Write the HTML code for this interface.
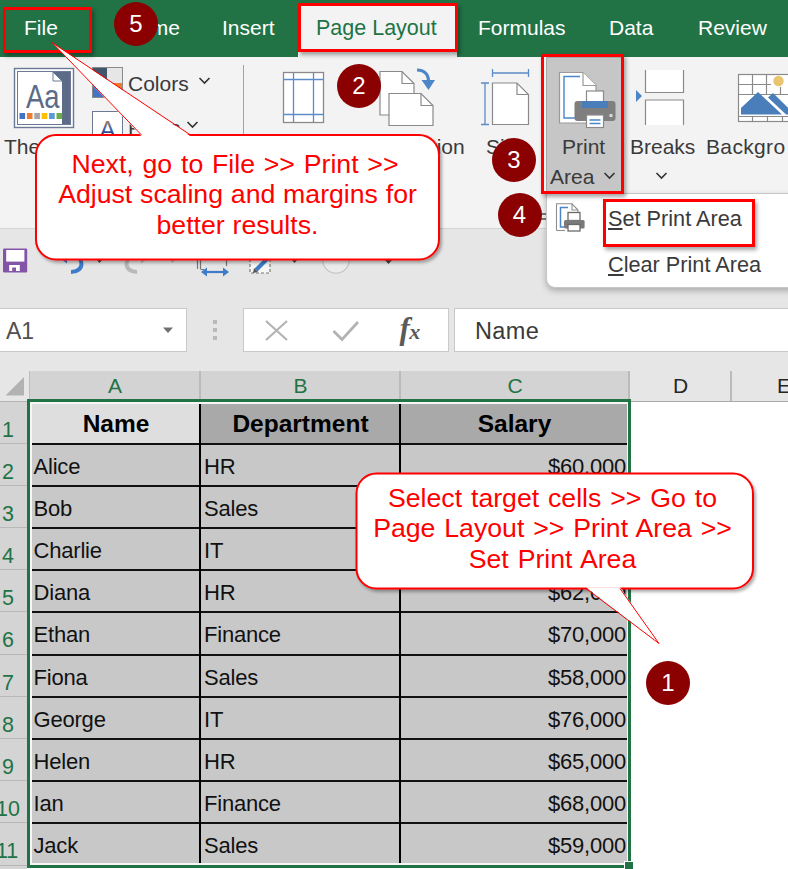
<!DOCTYPE html>
<html lang="en">
<head>
<meta charset="utf-8">
<title>Set Print Area</title>
<style>
html,body{margin:0;padding:0;}
body{width:788px;height:869px;overflow:hidden;background:#e6e6e6;font-family:"Liberation Sans",sans-serif;position:relative;color:#262626;}
.abs{position:absolute;}
#stage{position:absolute;left:0;top:0;width:788px;height:869px;overflow:hidden;}
/* tab bar */
#tabbar{left:0;top:0;width:788px;height:57px;background:#217346;}
.tab{position:absolute;top:16px;font-size:21px;line-height:24px;color:#fff;white-space:nowrap;}
#tabsel{left:298px;top:3px;width:159px;height:54px;background:#f3f3f3;}
/* ribbon */
#ribbon{left:0;top:57px;width:788px;height:171px;background:#f3f3f3;border-bottom:1px solid #d4d4d4;}
.rl{position:absolute;font-size:21px;line-height:24px;color:#3a3a3a;white-space:nowrap;}
.redbox{position:absolute;border:3px solid #ff0000;box-sizing:border-box;box-shadow:2px 3px 4px rgba(0,0,0,.35);}
.circ{position:absolute;width:44px;height:44px;border-radius:50%;background:#8b0000;color:#fff;font-size:24px;line-height:44px;text-align:center;}
/* callouts */
.ctext{position:absolute;color:#ff0000;font-size:26.67px;line-height:31px;text-align:center;white-space:nowrap;}
/* grid */
.colh{position:absolute;top:371px;height:30px;font-size:21px;line-height:29px;text-align:center;color:#262626;box-sizing:border-box;}
.rowh{position:absolute;left:0;width:28px;font-size:21.5px;color:#217346;text-align:left;white-space:nowrap;}
.cell{position:absolute;box-sizing:border-box;font-size:22px;letter-spacing:-.2px;white-space:nowrap;color:#111;}
.hd{font-weight:bold;font-size:24.5px;letter-spacing:0;text-align:center;color:#000;}
</style>
</head>
<body>
<div id="stage">

<!-- ===== TAB BAR ===== -->
<div id="tabbar" class="abs"></div>
<div id="tabsel" class="abs"></div>
<div class="tab" style="left:24px;">File</div>
<div class="tab" style="left:124px;">Home</div>
<div class="tab" style="left:222px;">Insert</div>
<div class="tab" style="left:316px;color:#217346;font-size:21.5px;">Page Layout</div>
<div class="tab" style="left:478px;">Formulas</div>
<div class="tab" style="left:609px;">Data</div>
<div class="tab" style="left:698px;">Review</div>

<!-- ===== RIBBON ===== -->
<div id="ribbon" class="abs"></div>
<!--RIBBON-ITEMS-->
<!-- Themes icon -->
<svg class="abs" style="left:13px;top:67px;" width="62" height="62" viewBox="0 0 62 62">
  <rect x="1.5" y="1.5" width="59" height="59" fill="#fff" stroke="#6b7a94" stroke-width="1.4"/>
  <rect x="4.5" y="4.5" width="53" height="53" fill="#fff" stroke="#6b7a94" stroke-width="1"/>
  <rect x="49" y="5" width="8" height="52" fill="#5c6b87"/>
  <polygon points="40,5 57,5 57,22 49,22 49,14" fill="#5c6b87"/>
  <polygon points="40,5 49,14 40,14" fill="#fff" stroke="#6b7a94" stroke-width="1"/>
  <text x="13" y="40.500" font-family="Liberation Sans, sans-serif" font-size="33.500" fill="#5c6b87" textLength="33.500" lengthAdjust="spacingAndGlyphs">Aa</text>
  <rect x="6.5" y="46" width="5.6" height="6" fill="#4472c4"/>
  <rect x="13.9" y="46" width="5.6" height="6" fill="#ed7d31"/>
  <rect x="21.3" y="46" width="5.6" height="6" fill="#a5a5a5"/>
  <rect x="28.7" y="46" width="5.6" height="6" fill="#ffc000"/>
  <rect x="36.1" y="46" width="5.6" height="6" fill="#5b9bd5"/>
  <rect x="43.5" y="46" width="5.6" height="6" fill="#70ad47"/>
</svg>
<div class="rl" style="left:4px;top:135px;">Themes</div>
<!-- Colors icon -->
<svg class="abs" style="left:92px;top:67px;" width="31" height="31" viewBox="0 0 31 31">
  <rect x="0.5" y="0.5" width="30" height="30" fill="#e7e6e6" stroke="#8a8a8a" stroke-width="1"/>
  <rect x="1" y="1" width="14" height="15" fill="#44546a"/>
  <rect x="1" y="16" width="14" height="14" fill="#4472c4"/>
  <rect x="15" y="16" width="15" height="14" fill="#ed7d31"/>
</svg>
<div class="rl" style="left:128px;top:72px;">Colors</div>
<svg class="abs" style="left:198px;top:76px;" width="14" height="10" viewBox="0 0 14 10"><polyline points="1.5,2 6.5,7 11.5,2" fill="none" stroke="#333" stroke-width="1.6"/></svg>
<!-- Fonts icon -->
<svg class="abs" style="left:92px;top:111px;" width="31" height="31" viewBox="0 0 31 31">
  <defs><linearGradient id="fg" x1="0" y1="0" x2="0" y2="1"><stop offset="0" stop-color="#e0902a"/><stop offset=".5" stop-color="#3a5fb0"/><stop offset="1" stop-color="#000"/></linearGradient></defs>
  <rect x="0.5" y="0.5" width="30" height="30" fill="#fff" stroke="#6b7a94" stroke-width="1"/>
  <text x="15.5" y="27" text-anchor="middle" font-family="Liberation Sans, sans-serif" font-size="24" fill="url(#fg)">A</text>
</svg>
<div class="rl" style="left:128px;top:116px;">Fonts</div>
<svg class="abs" style="left:186px;top:120px;" width="14" height="10" viewBox="0 0 14 10"><polyline points="1.5,2 6.5,7 11.5,2" fill="none" stroke="#333" stroke-width="1.6"/></svg>
<!-- separator -->
<div class="abs" style="left:243px;top:65px;width:1px;height:69px;background:#a3a3a3;"></div>
<!-- Margins icon -->
<svg class="abs" style="left:282px;top:71px;" width="44" height="54" viewBox="0 0 44 54">
  <rect x="1.5" y="1.5" width="40" height="50" fill="#fff" stroke="#8a8a8a" stroke-width="1.3"/>
  <path d="M11.5 2V51M31.5 2V51M2 8.5H41M2 43.5H41" stroke="#5b8cc9" stroke-width="1.3" fill="none"/>
</svg>
<!-- Orientation icon -->
<svg class="abs" style="left:377.500px;top:64px;" width="60" height="64" viewBox="0 0 60 64">
  <path d="M2 7.5H24L36 19.5V51H2Z" fill="#fff" stroke="#8a8a8a" stroke-width="1.2"/>
  <path d="M24 7.5V19.5H36" fill="none" stroke="#8a8a8a" stroke-width="1.2"/>
  <path d="M11 29.500H43L55 41.500V61.500H11Z" fill="#fff" stroke="#8a8a8a" stroke-width="1.2"/>
  <path d="M43 29.500V41.500H55" fill="none" stroke="#8a8a8a" stroke-width="1.2"/>
  <path d="M39 6C47 6 51 11 50.500 19" fill="none" stroke="#4a86c8" stroke-width="3.2"/>
  <polygon points="43.500,16 57,16 50.500,26" fill="#4a86c8"/>
</svg>
<div class="rl" style="left:362px;top:135px;">Orientation</div>
<!-- Size icon -->
<svg class="abs" style="left:480px;top:66px;" width="54" height="62" viewBox="0 0 54 62">
  <path d="M12.500 17H37L48.500 28.500V58.500H12.500Z" fill="#fff" stroke="#8a8a8a" stroke-width="1.2"/>
  <path d="M37 17V28.500H48.500" fill="none" stroke="#8a8a8a" stroke-width="1.2"/>
  <path d="M12.500 7H48.500M12.500 3V11M48.500 3V11" stroke="#5b8cc9" stroke-width="1.3" fill="none"/>
  <path d="M5 17V58.500M1 17H9M1 58.500H9" stroke="#5b8cc9" stroke-width="1.3" fill="none"/>
</svg>
<div class="rl" style="left:486px;top:135px;">Size</div>
<!-- Print Area button -->
<div class="abs" style="left:546px;top:57px;width:76px;height:135px;background:#c6c6c6;border:1px solid #a8a8a8;box-sizing:border-box;"></div>
<svg class="abs" style="left:556px;top:68px;" width="64" height="64" viewBox="0 0 64 64">
  <path d="M3.500 4.500H27L40 17.500V55H3.500Z" fill="#fff" stroke="#9a9a9a" stroke-width="1.2"/>
  <path d="M27 4.500V17.500H40" fill="#fff" stroke="#9a9a9a" stroke-width="1.2"/>
  <path d="M24 8.500H8V50H20" fill="none" stroke="#4a86c8" stroke-width="1.4"/>
  <rect x="30.500" y="23" width="17" height="14" fill="#fff" stroke="#8a8a8a" stroke-width="1.2"/>
  <rect x="18.500" y="33" width="41" height="20" rx="3" fill="#7f7f7f"/>
  <rect x="26" y="33" width="26" height="7" fill="#4a7ebb"/>
  <rect x="30.500" y="47" width="17" height="12.500" fill="#fff" stroke="#8a8a8a" stroke-width="1.2"/>
  <path d="M33.500 52H44.500M33.500 55.500H44.500" stroke="#4a86c8" stroke-width="1.3"/>
  <rect x="53.500" y="46" width="3" height="3" fill="#d9d9d9"/>
</svg>
<div class="rl" style="left:562px;top:135px;">Print</div>
<div class="rl" style="left:550px;top:165px;">Area</div>
<svg class="abs" style="left:603px;top:171px;" width="14" height="10" viewBox="0 0 14 10"><polyline points="1.5,2 6.5,7 11.5,2" fill="none" stroke="#333" stroke-width="1.6"/></svg>
<!-- Breaks -->
<svg class="abs" style="left:634px;top:68px;" width="54" height="60" viewBox="0 0 54 60">
  <path d="M11.500 2V24.500H49.500V2" fill="#fff" stroke="#8a8a8a" stroke-width="1.2"/>
  <path d="M11.500 57V32H49.500V57" fill="#fff" stroke="#8a8a8a" stroke-width="1.2"/>
  <polygon points="2,22 8,28 2,34" fill="#4a86c8"/>
</svg>
<div class="rl" style="left:630px;top:135px;">Breaks</div>
<svg class="abs" style="left:655px;top:171px;" width="14" height="10" viewBox="0 0 14 10"><polyline points="1.5,2 6.5,7 11.5,2" fill="none" stroke="#333" stroke-width="1.6"/></svg>
<!-- Background -->
<svg class="abs" style="left:737px;top:73px;" width="60" height="50" viewBox="0 0 60 50">
  <rect x="1.500" y="1.500" width="58" height="47" fill="#fff" stroke="#8a8a8a" stroke-width="1.2"/>
  <path d="M15.500 1.500V22M29.500 1.500V22M43.500 14V22M1.500 11.500H34M1.500 21.500H60M1.500 43.500H60M15.500 43.500V48M30.500 43.500V48M45.500 43.500V48" stroke="#8a8a8a" stroke-width="1.2" fill="none"/>
  <polygon points="4,41.500 4,35 21,19 45,41.500" fill="#4a7ebb"/>
  <polygon points="31,24.500 36,20 58,41.500 49,41.500" fill="#4a7ebb"/>
  <circle cx="41.500" cy="8" r="5.200" fill="#eac56f"/>
</svg>
<div class="rl" style="left:706px;top:135px;letter-spacing:.35px;">Backgro</div>
<!-- group label remnants -->
<div class="abs" style="left:540px;top:213px;width:6px;height:1.5px;background:#7a7a7a;"></div>
<div class="abs" style="left:540px;top:218px;width:6px;height:1.5px;background:#7a7a7a;"></div>
<!-- dropdown menu -->
<div class="abs" style="left:546px;top:193px;width:260px;height:95px;background:#fff;border:1px solid #c6c6c6;border-radius:0 0 0 9px;box-sizing:border-box;box-shadow:0 3px 6px rgba(0,0,0,.25);"></div>
<svg class="abs" style="left:555px;top:202px;" width="32" height="32" viewBox="0 0 32 32">
  <path d="M1.500 28.500V1.800H17L23 8V11" fill="#fff" stroke="#8f8f8f" stroke-width="1.100"/>
  <path d="M1.500 28.500H10" fill="none" stroke="#8f8f8f" stroke-width="1.100"/>
  <path d="M17 1.800V8H23" fill="none" stroke="#8f8f8f" stroke-width="1.100"/>
  <path d="M13 5.500H5.500V25H9" fill="none" stroke="#4a86c8" stroke-width="1.500"/>
  <rect x="13" y="10.500" width="12" height="8" fill="#fff" stroke="#6a6a6a" stroke-width="1.300"/>
  <rect x="9" y="18" width="20.600" height="8.500" rx="1.500" fill="#7a7a7a"/>
  <rect x="13" y="22.500" width="12" height="6.500" fill="#fff" stroke="#6a6a6a" stroke-width="1.300"/>
</svg>
<div class="rl" style="left:608px;top:207px;font-size:21.700px;"><u>S</u>et Print Area</div>
<div class="rl" style="left:608px;top:253px;font-size:21.700px;"><u>C</u>lear Print Area</div>
<!--/RIBBON-ITEMS-->

<!-- ===== QAT + FORMULA BAR ===== -->
<!--QAT-->
<!-- Save icon -->
<svg class="abs" style="left:3px;top:248px;" width="25" height="25" viewBox="0 0 25 25">
  <rect x="0" y="0.500" width="24.200" height="24" rx="1.200" fill="#8455a6"/>
  <rect x="3.200" y="2" width="18.200" height="11.600" fill="#fff"/>
  <rect x="6.200" y="17" width="10.600" height="6" fill="#fff"/>
  <rect x="9.200" y="19.500" width="3.800" height="3.500" fill="#8455a6"/>
</svg>
<!-- Undo -->
<svg class="abs" style="left:56px;top:246px;" width="30" height="30" viewBox="0 0 30 30">
  <path d="M8 10H16C23 10 25.500 14.500 25.500 18C25.500 22.500 21.500 26 15 26" fill="none" stroke="#3d7cc9" stroke-width="4"/>
  <polygon points="1,10 11,2.500 11,17.500" fill="#3d7cc9"/>
</svg>
<svg class="abs" style="left:95px;top:257.500px;" width="9" height="6" viewBox="0 0 9 6"><polygon points="0.500,0.500 8.500,0.500 4.500,5" fill="#444"/></svg>
<!-- Redo -->
<svg class="abs" style="left:122px;top:246px;" width="30" height="30" viewBox="0 0 30 30">
  <path d="M22 10H14C7 10 4.500 14.500 4.500 18C4.500 22.500 8.500 26 15 26" fill="none" stroke="#b9b9b9" stroke-width="4"/>
  <polygon points="29,10 19,2.500 19,17.500" fill="#b9b9b9"/>
</svg>
<svg class="abs" style="left:168px;top:258px;" width="9" height="6" viewBox="0 0 9 6"><polygon points="0.500,0.500 8.500,0.500 4.500,5" fill="#bbb"/></svg>
<!-- fit icon -->
<svg class="abs" style="left:195px;top:247.500px;" width="34" height="32" viewBox="0 0 34 32">
  <path d="M2.500 4V21M5.500 4V21M5.500 21.500H9" stroke="#777" stroke-width="1.200" fill="none"/>
  <path d="M31.500 4V18" stroke="#777" stroke-width="1.200" fill="none"/>
  <path d="M10 24H30" stroke="#3d7cc9" stroke-width="2.200" fill="none"/>
  <polygon points="6,24 12,19.500 12,28.500" fill="#3d7cc9"/>
  <polygon points="34,24 28,19.500 28,28.500" fill="#3d7cc9"/>
</svg>
<!-- edit icon -->
<svg class="abs" style="left:248px;top:246px;" width="28" height="30" viewBox="0 0 28 30">
  <rect x="2" y="8" width="20" height="19" fill="#f7f7f7" stroke="#777" stroke-width="1.200" stroke-dasharray="3 2"/>
  <path d="M8 24L23 9" stroke="#3d7cc9" stroke-width="4"/>
  <polygon points="5,27 6,22 10,26" fill="#555"/>
</svg>
<svg class="abs" style="left:290px;top:258px;" width="9" height="6" viewBox="0 0 9 6"><polygon points="0.500,0.500 8.500,0.500 4.500,5" fill="#444"/></svg>
<svg class="abs" style="left:321px;top:245px;" width="30" height="30" viewBox="0 0 30 30"><circle cx="15" cy="15" r="13.200" fill="#ececec" stroke="#c4c4c4" stroke-width="1.200"/></svg>
<svg class="abs" style="left:383.500px;top:259px;" width="9" height="6" viewBox="0 0 9 6"><polygon points="0.500,0.500 8.500,0.500 4.500,5" fill="#444"/></svg>

<!-- Name box -->
<div class="abs" style="left:-1px;top:308px;width:188px;height:44px;background:#fff;border:1px solid #c9c9c9;box-sizing:border-box;"></div>
<div class="abs" style="left:6px;top:318px;font-size:23px;line-height:26px;color:#505050;">A1</div>
<svg class="abs" style="left:162px;top:327px;" width="12" height="8" viewBox="0 0 12 8"><polygon points="1,0.500 11,0.500 6,6" fill="#707070"/></svg>
<!-- dots -->
<div class="abs" style="left:213px;top:320px;width:4px;height:4px;background:#b9b9b9;"></div>
<div class="abs" style="left:213px;top:328px;width:4px;height:4px;background:#b9b9b9;"></div>
<div class="abs" style="left:213px;top:336px;width:4px;height:4px;background:#b9b9b9;"></div>
<!-- buttons box -->
<div class="abs" style="left:243px;top:308px;width:206px;height:44px;background:#fff;border:1px solid #c9c9c9;box-sizing:border-box;"></div>
<svg class="abs" style="left:264px;top:319px;" width="26" height="24" viewBox="0 0 26 24"><path d="M2 2L23 21M23 2L2 21" stroke="#b3b3b3" stroke-width="2.200" fill="none"/></svg>
<svg class="abs" style="left:331px;top:319px;" width="30" height="24" viewBox="0 0 30 24"><path d="M2.500 12L11 20.500L27 3" stroke="#b3b3b3" stroke-width="2.800" fill="none"/></svg>
<div class="abs" style="left:399.500px;top:312px;font-family:'Liberation Serif',serif;font-style:italic;font-weight:bold;font-size:31px;line-height:34px;color:#5a5a5a;letter-spacing:-.5px;">f<span style="font-size:22px;">x</span></div>
<!-- input box -->
<div class="abs" style="left:454px;top:308px;width:340px;height:44px;background:#fff;border:1px solid #c9c9c9;box-sizing:border-box;"></div>
<div class="abs" style="left:475px;top:317.500px;font-size:23.500px;letter-spacing:.4px;line-height:26px;color:#3a3a3a;">Name</div>
<!--/QAT-->

<!-- ===== GRID ===== -->
<!--GRID-->
<div class="abs" style="left:0;top:370px;width:788px;height:499px;background:#fff;"></div>
<div class="abs" style="left:0;top:370px;width:788px;height:31px;background:#e6e6e6;border-bottom:1px solid #a8a8a8;box-sizing:content-box;"></div>
<svg class="abs" style="left:0;top:370px;" width="29" height="30"><polygon points="24,7 24,25.500 5.500,25.500" fill="#b2b2b2"/></svg>
<div class="colh" style="left:30px;width:170px;background:#d3d3d3;color:#217346;">A</div>
<div class="abs" style="left:199px;top:371px;width:1.500px;height:30px;background:#bbb;"></div>
<div class="colh" style="left:201px;width:199px;background:#d3d3d3;color:#217346;">B</div>
<div class="abs" style="left:399px;top:371px;width:1.500px;height:30px;background:#bbb;"></div>
<div class="colh" style="left:401px;width:228px;background:#d3d3d3;color:#217346;">C</div>
<div class="abs" style="left:628px;top:371px;width:1.500px;height:30px;background:#bbb;"></div>
<div class="colh" style="left:630px;width:101px;background:#e6e6e6;color:#262626;">D</div>
<div class="abs" style="left:730px;top:371px;width:1.500px;height:30px;background:#bbb;"></div>
<div class="colh" style="left:732px;width:104px;background:#e6e6e6;color:#262626;">E</div>
<div class="abs" style="left:835px;top:371px;width:1.500px;height:30px;background:#bbb;"></div>
<div class="abs" style="left:28.500px;top:371px;width:1.500px;height:28px;background:#bdbdbd;"></div>
<div class="abs" style="left:0;top:401px;width:27px;height:1px;background:#b4b4b4;"></div>
<div class="abs" style="left:0;top:402px;width:27px;height:467px;background:#d4d4d4;"></div>
<div class="abs" style="left:30px;top:402px;width:598px;height:464px;background:#f6f6f6;"></div>
<div class="abs" style="left:32px;top:404px;width:595px;height:459px;background:#c8c8c8;"></div>
<div class="abs" style="left:32px;top:404px;width:169px;height:40px;background:#dedede;"></div>
<div class="abs" style="left:201px;top:404px;width:426px;height:40px;background:#a9a9a9;"></div>
<div class="rowh" style="top:402px;height:42px;line-height:56px;left:2px;">1</div>
<div class="abs" style="left:0;top:443px;width:27px;height:1px;background:#b8b8b8;"></div>
<div class="cell hd" style="left:31px;top:402px;width:170px;height:42px;line-height:44px;">Name</div>
<div class="cell hd" style="left:201px;top:402px;width:199px;height:42px;line-height:44px;">Department</div>
<div class="cell hd" style="left:401px;top:402px;width:227px;height:42px;line-height:44px;">Salary</div>
<div class="abs" style="left:32px;top:443px;width:595px;height:2px;background:#111;"></div>
<div class="rowh" style="top:444px;height:42px;line-height:56px;left:2px;">2</div>
<div class="abs" style="left:0;top:485px;width:27px;height:1px;background:#b8b8b8;"></div>
<div class="cell" style="left:33.500px;top:444px;height:42px;line-height:45px;">Alice</div>
<div class="cell" style="left:204px;top:444px;height:42px;line-height:45px;">HR</div>
<div class="cell" style="left:401px;top:444px;width:225px;text-align:right;height:42px;line-height:45px;">$60,000</div>
<div class="abs" style="left:32px;top:485px;width:595px;height:2px;background:#111;"></div>
<div class="rowh" style="top:486px;height:42px;line-height:56px;left:2px;">3</div>
<div class="abs" style="left:0;top:527px;width:27px;height:1px;background:#b8b8b8;"></div>
<div class="cell" style="left:33.500px;top:486px;height:42px;line-height:45px;">Bob</div>
<div class="cell" style="left:204px;top:486px;height:42px;line-height:45px;">Sales</div>
<div class="cell" style="left:401px;top:486px;width:225px;text-align:right;height:42px;line-height:45px;">$55,000</div>
<div class="abs" style="left:32px;top:527px;width:595px;height:2px;background:#111;"></div>
<div class="rowh" style="top:528px;height:42px;line-height:56px;left:2px;">4</div>
<div class="abs" style="left:0;top:569px;width:27px;height:1px;background:#b8b8b8;"></div>
<div class="cell" style="left:33.500px;top:528px;height:42px;line-height:45px;">Charlie</div>
<div class="cell" style="left:204px;top:528px;height:42px;line-height:45px;">IT</div>
<div class="cell" style="left:401px;top:528px;width:225px;text-align:right;height:42px;line-height:45px;">$75,000</div>
<div class="abs" style="left:32px;top:569px;width:595px;height:2px;background:#111;"></div>
<div class="rowh" style="top:570px;height:42px;line-height:56px;left:2px;">5</div>
<div class="abs" style="left:0;top:611px;width:27px;height:1px;background:#b8b8b8;"></div>
<div class="cell" style="left:33.500px;top:570px;height:42px;line-height:45px;">Diana</div>
<div class="cell" style="left:204px;top:570px;height:42px;line-height:45px;">HR</div>
<div class="cell" style="left:401px;top:570px;width:225px;text-align:right;height:42px;line-height:45px;">$62,000</div>
<div class="abs" style="left:32px;top:611px;width:595px;height:2px;background:#111;"></div>
<div class="rowh" style="top:612px;height:43px;line-height:57px;left:2px;">6</div>
<div class="abs" style="left:0;top:654px;width:27px;height:1px;background:#b8b8b8;"></div>
<div class="cell" style="left:33.500px;top:612px;height:43px;line-height:46px;">Ethan</div>
<div class="cell" style="left:204px;top:612px;height:43px;line-height:46px;">Finance</div>
<div class="cell" style="left:401px;top:612px;width:225px;text-align:right;height:43px;line-height:46px;">$70,000</div>
<div class="abs" style="left:32px;top:654px;width:595px;height:2px;background:#111;"></div>
<div class="rowh" style="top:655px;height:42px;line-height:56px;left:2px;">7</div>
<div class="abs" style="left:0;top:696px;width:27px;height:1px;background:#b8b8b8;"></div>
<div class="cell" style="left:33.500px;top:655px;height:42px;line-height:45px;">Fiona</div>
<div class="cell" style="left:204px;top:655px;height:42px;line-height:45px;">Sales</div>
<div class="cell" style="left:401px;top:655px;width:225px;text-align:right;height:42px;line-height:45px;">$58,000</div>
<div class="abs" style="left:32px;top:696px;width:595px;height:2px;background:#111;"></div>
<div class="rowh" style="top:697px;height:42px;line-height:56px;left:2px;">8</div>
<div class="abs" style="left:0;top:738px;width:27px;height:1px;background:#b8b8b8;"></div>
<div class="cell" style="left:33.500px;top:697px;height:42px;line-height:45px;">George</div>
<div class="cell" style="left:204px;top:697px;height:42px;line-height:45px;">IT</div>
<div class="cell" style="left:401px;top:697px;width:225px;text-align:right;height:42px;line-height:45px;">$76,000</div>
<div class="abs" style="left:32px;top:738px;width:595px;height:2px;background:#111;"></div>
<div class="rowh" style="top:739px;height:42px;line-height:56px;left:2px;">9</div>
<div class="abs" style="left:0;top:780px;width:27px;height:1px;background:#b8b8b8;"></div>
<div class="cell" style="left:33.500px;top:739px;height:42px;line-height:45px;">Helen</div>
<div class="cell" style="left:204px;top:739px;height:42px;line-height:45px;">HR</div>
<div class="cell" style="left:401px;top:739px;width:225px;text-align:right;height:42px;line-height:45px;">$65,000</div>
<div class="abs" style="left:32px;top:780px;width:595px;height:2px;background:#111;"></div>
<div class="rowh" style="top:781px;height:42px;line-height:56px;left:-4px;">10</div>
<div class="abs" style="left:0;top:822px;width:27px;height:1px;background:#b8b8b8;"></div>
<div class="cell" style="left:33.500px;top:781px;height:42px;line-height:45px;">Ian</div>
<div class="cell" style="left:204px;top:781px;height:42px;line-height:45px;">Finance</div>
<div class="cell" style="left:401px;top:781px;width:225px;text-align:right;height:42px;line-height:45px;">$68,000</div>
<div class="abs" style="left:32px;top:822px;width:595px;height:2px;background:#111;"></div>
<div class="rowh" style="top:823px;height:43px;line-height:57px;left:-4px;">11</div>
<div class="abs" style="left:0;top:865px;width:27px;height:1px;background:#b8b8b8;"></div>
<div class="cell" style="left:33.500px;top:823px;height:43px;line-height:46px;">Jack</div>
<div class="cell" style="left:204px;top:823px;height:43px;line-height:46px;">Sales</div>
<div class="cell" style="left:401px;top:823px;width:225px;text-align:right;height:43px;line-height:46px;">$59,000</div>
<div class="abs" style="left:199px;top:404px;width:2px;height:459px;background:#000;"></div>
<div class="abs" style="left:399px;top:404px;width:2px;height:459px;background:#000;"></div>
<div class="abs" style="left:27px;top:399px;width:604px;height:469px;border:3px solid #217346;box-sizing:border-box;"></div>
<div class="abs" style="left:624px;top:861px;width:8px;height:9px;background:#217346;border:1px solid #fff;"></div>
<!--/GRID-->

<!-- ===== ANNOTATIONS ===== -->
<!--ANNOT-->
<!-- red boxes -->
<div class="redbox" style="left:3px;top:7px;width:89px;height:46px;"></div>
<div class="redbox" style="left:298px;top:3px;width:160px;height:49px;"></div>
<div class="redbox" style="left:541px;top:54px;width:83px;height:140px;"></div>
<div class="redbox" style="left:603px;top:199px;width:152px;height:48px;"></div>
<!-- callout shapes -->
<svg class="abs" style="left:0;top:0;" width="788" height="869" viewBox="0 0 788 869">
  <defs>
    <filter id="sh" x="-5%" y="-5%" width="112%" height="115%"><feDropShadow dx="2" dy="2.500" stdDeviation="1.500" flood-color="#000" flood-opacity=".32"/></filter>
  </defs>
  <!-- callout 5 -->
  <rect filter="url(#sh)" x="36" y="135" width="403" height="124.500" rx="20" ry="20" fill="#fff" stroke="#ff0000" stroke-width="2"/>
  <path d="M141.500 136.200 L52 42.500 L190.500 136.200 Z" fill="#fff"/>
  <path d="M141.500 135 L52 42.500 L190.500 135" fill="none" stroke="#ff0000" stroke-width="1" stroke-linejoin="round"/>
  <!-- callout 1 -->
  <rect filter="url(#sh)" x="356.500" y="473.500" width="396.500" height="115" rx="20" ry="20" fill="#fff" stroke="#ff0000" stroke-width="2"/>
  <path d="M620 587.300 L659 643.500 L586 587.300 Z" fill="#fff"/>
  <path d="M620 588.500 L659 643.500 L586 588.500" fill="none" stroke="#ff0000" stroke-width="1" stroke-linejoin="round"/>
</svg>
<div class="ctext" style="left:37px;top:148.500px;width:401px;line-height:30.500px;word-spacing:.4px;"><span style="word-spacing:1.400px;position:relative;left:-2.500px;">Next, go to File &gt;&gt; Print &gt;&gt;</span><br>Adjust scaling and margins for<br>better results.</div>
<div class="ctext" style="left:352px;top:482.500px;width:401px;line-height:30.900px;word-spacing:1.500px;">Select target cells &gt;&gt; Go to<br>Page Layout &gt;&gt; Print Area &gt;&gt;<br>Set Print Area</div>
<!-- numbered circles -->
<div class="circ" style="left:114px;top:2px;">5</div>
<div class="circ" style="left:337px;top:64px;">2</div>
<div class="circ" style="left:492px;top:137.500px;">3</div>
<div class="circ" style="left:497.500px;top:193px;">4</div>
<div class="circ" style="left:646px;top:661px;">1</div>
<!--/ANNOT-->

</div>
</body>
</html>
